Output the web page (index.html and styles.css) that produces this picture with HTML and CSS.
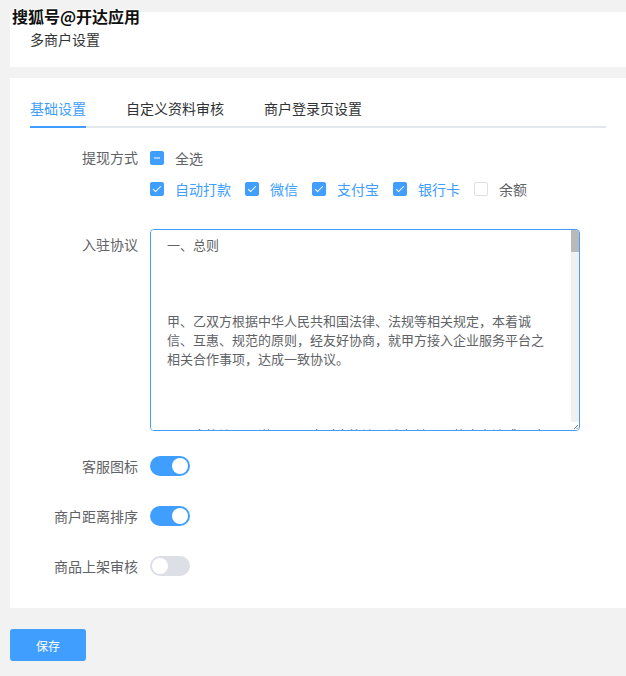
FILE: index.html
```html
<!doctype html>
<html lang="zh-CN">
    <head>
        <meta charset="UTF-8">
        <title>多商户设置</title>
        <link rel="stylesheet" href="styles.css">
    </head>
    <body>
        <div class="mark">搜狐号@开达应用</div>

        <div class="page">
          <div class="head-card">多商户设置</div>

          <div class="main-card">
            <div class="tabs">
              <div class="tab active"><span>基础设置</span></div>
              <div class="tab"><span>自定义资料审核</span></div>
              <div class="tab"><span>商户登录页设置</span></div>
            </div>

            <div class="form">
              <div class="form-item first">
                <div class="label">提现方式</div>
                <div class="content">
                  <div class="check-row">
                    <span class="check"><i class="box half"></i><b>全选</b></span>
                  </div>
                  <div class="check-row">
                    <span class="check on"><i class="box"></i><b>自动打款</b></span>
                    <span class="check on"><i class="box"></i><b>微信</b></span>
                    <span class="check on"><i class="box"></i><b>支付宝</b></span>
                    <span class="check on"><i class="box"></i><b>银行卡</b></span>
                    <span class="check"><i class="box"></i><b>余额</b></span>
                  </div>
                </div>
              </div>

              <div class="form-item">
                <div class="label">入驻协议</div>
                <div class="content">
                  <div class="text-wrap">
<textarea class="agreement">一、总则



甲、乙双方根据中华人民共和国法律、法规等相关规定，本着诚信、互惠、规范的原则，经友好协商，就甲方接入企业服务平台之相关合作事项，达成一致协议。



二、本协议用语说明，双方对本协议下述有关用语的含义达成一致意见：



1、企业服务平台：指甲方运营的为入驻商户提供商品展示、交易及结算服务的网络平台。



三、入驻条件



乙方应为依法设立并有效存续的企业或个体工商户，具备相应的经营资质，并保证所提交的资料真实、合法、有效。



四、甲方的权利和义务



甲方负责平台的日常运营与维护，为乙方提供必要的技术支持，并有权对乙方发布的商品信息进行审核。



五、乙方的权利和义务



乙方应遵守平台的各项规则，合法经营，保证所售商品质量符合国家标准，并依法承担相应的售后责任。



六、费用及结算



乙方通过平台完成的交易款项，由甲方按照双方约定的结算周期及方式进行结算。



七、保密条款



双方对在合作过程中知悉的对方商业秘密负有保密义务，未经对方书面同意，不得向任何第三方披露。



八、违约责任



任何一方违反本协议约定的，应承担相应的违约责任，并赔偿由此给对方造成的损失。



九、其他



本协议未尽事宜，由双方另行协商解决。本协议自乙方在线确认之日起生效。</textarea>
                    <div class="scroll">
                      <div class="thumb"></div>
                      <div class="track"></div>
                      <div class="corner">
                        <svg width="8" height="8" viewBox="0 0 8 8"><path d="M7 3L3 7M7 5.5L5.5 7" stroke="#777" stroke-width="1" fill="none"/></svg>
                      </div>
                    </div>
                  </div>
                </div>
              </div>

              <div class="form-item">
                <div class="label">客服图标</div>
                <div class="content"><span class="switch on"></span></div>
              </div>

              <div class="form-item">
                <div class="label">商户距离排序</div>
                <div class="content"><span class="switch on"></span></div>
              </div>

              <div class="form-item">
                <div class="label">商品上架审核</div>
                <div class="content"><span class="switch"></span></div>
              </div>
            </div>
          </div>

          <button class="save">保存</button>
        </div>
    </body>
</html>
```

FILE: styles.css
```css
*{
  margin:0;
  padding:0;
  box-sizing:border-box;
}
body{
  background-color:#f2f2f2;
  font-family:"Noto Sans CJK SC","Noto Sans",sans-serif;
  font-size:14px;
  color:#606266;
}

/* 水印 */
.mark{
  position:absolute;
  left:12px;
  top:4px;
  font-size:16px;
  font-weight:bold;
  line-height:24px;
  color:#111;
  text-shadow:1px 0 0 #fff,-1px 0 0 #fff,0 1px 0 #fff,0 -1px 0 #fff;
}

.page{
  padding:12px 0 0 10px;
}
.head-card{
  height:55px;
  line-height:55px;
  padding-left:20px;
  background-color:#fff;
  color:#333;
  margin-bottom:11px;
}
.main-card{
  background-color:#fff;
  padding:10px 20px 27px;
}

/* 标签页 */
.tabs{
  display:flex;
  height:40px;
  border-bottom:2px solid #e4e7ed;
}
.tab{
  padding:0 20px;
  line-height:40px;
  color:#303133;
}
.tab:first-child{
  padding-left:0;
}
.tab span{
  display:block;
  height:40px;
}
.tab.active span{
  color:#409eff;
  border-bottom:2px solid #409eff;
}

/* 表单 */
.form{
  padding-top:14px;
}
.form-item{
  display:flex;
  margin-bottom:20px;
}
.form-item:last-child{
  margin-bottom:0;
}
.form-item.first{
  margin-bottom:25px;
}
.label{
  width:108px;
  margin-right:12px;
  text-align:right;
  line-height:30px;
  flex-shrink:0;
}
.form-item.first .label{
  line-height:31px;
}
.content{
  line-height:30px;
}

.check-row{
  display:flex;
  height:31px;
  align-items:center;
}
.check{
  display:flex;
  align-items:center;
  margin-right:14px;
}
.check b{
  font-weight:normal;
  margin-left:11px;
}
.check.on b{
  color:#409eff;
}
.box{
  position:relative;
  width:14px;
  height:14px;
  border:1px solid #dcdfe6;
  border-radius:2px;
  background-color:#fff;
}
.check.on .box,
.box.half{
  background-color:#409eff;
  border-color:#409eff;
}
.check.on .box:after{
  content:"";
  position:absolute;
  left:4px;
  top:1px;
  width:3px;
  height:7px;
  border:1px solid #fff;
  border-left:0;
  border-top:0;
  transform:rotate(45deg);
}
.box.half:before{
  content:"";
  position:absolute;
  left:0;
  right:0;
  top:5px;
  height:2px;
  background-color:#fff;
  transform:scale(.5);
}

/* 协议文本框 */
.text-wrap{
  display:flex;
  width:430px;
  height:202px;
  border:1px solid #409eff;
  border-radius:4px;
  overflow:hidden;
}
.agreement{
  display:block;
  flex:1;
  height:100%;
  padding:5px 21px 5px 16px;
  border:0;
  resize:none;
  overflow:hidden;
  font-family:"Noto Sans CJK SC",sans-serif;
  font-size:13px;
  line-height:19px;
  color:#606266;
  outline:none;
}
.scroll{
  display:flex;
  flex-direction:column;
  width:8px;
  flex-shrink:0;
}
.thumb{
  height:22px;
  background-color:#b9b9b9;
}
.track{
  flex:1;
  background-color:#f0f0f0;
}
.corner{
  height:8px;
  background-color:#fff;
  line-height:0;
}

/* 开关 */
.switch{
  display:block;
  position:relative;
  width:40px;
  height:20px;
  margin-top:5px;
  border-radius:10px;
  background-color:#dcdfe6;
}
.switch:after{
  content:"";
  position:absolute;
  left:2px;
  top:2px;
  width:16px;
  height:16px;
  border-radius:50%;
  background-color:#fff;
}
.switch.on{
  background-color:#409eff;
}
.switch.on:after{
  left:22px;
}

.save{
  display:block;
  margin-top:21px;
  width:76px;
  height:32px;
  border:0;
  border-radius:3px;
  background-color:#409eff;
  color:#fff;
  font-family:"Noto Sans CJK SC",sans-serif;
  font-size:12px;
}
```
